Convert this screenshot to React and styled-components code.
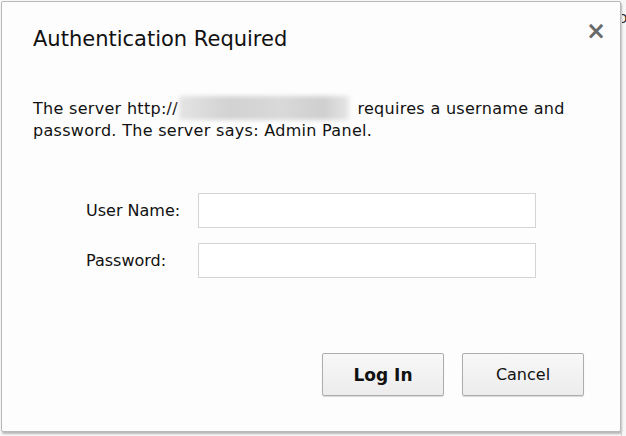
import React from "react";
import styled, { createGlobalStyle } from "styled-components";

const Global = createGlobalStyle`
  html, body { margin: 0; padding: 0; background: #f7f7f7; }
  body { font-family: "DejaVu Sans", "Liberation Sans", sans-serif; color: #222; }
`;

export default function App() {
  return (
    <Page>
      <Global />
      <Dialog>
        <Header>
          <Title>Authentication Required</Title>
          <Close>×</Close>
        </Header>
        <Message>
          The server http://<Blur /> requires a username and password. The server says: Admin Panel.
        </Message>
        <Form>
          <Label>User Name:</Label>
          <Input type="text" />
          <Label>Password:</Label>
          <Input type="password" />
        </Form>
        <Actions>
          <Button $primary>Log In</Button>
          <Button>Cancel</Button>
        </Actions>
      </Dialog>
      <Behind>
        <span>D</span>
      </Behind>
    </Page>
  );
}

const Page = styled.div`
  display: flex;
  width: 626px;
  height: 436px;
  padding: 1px 0 0 1px;
  box-sizing: border-box;
  overflow: hidden;
`;

const Dialog = styled.div`
  width: 620px;
  height: 431px;
  box-sizing: border-box;
  flex-shrink: 0;
  background: #fdfdfd;
  border: 1px solid #b9b9b9;
  border-radius: 2px;
  box-shadow: 1px 2px 2px rgba(0, 0, 0, 0.25);
  padding: 22px 14px 0 31px;
  display: flex;
  flex-direction: column;
`;

const Header = styled.div`
  display: flex;
  justify-content: space-between;
  align-items: flex-start;
`;

const Title = styled.h1`
  margin: 0;
  font-family: "DejaVu Sans", sans-serif;
  font-weight: normal;
  font-size: 21px;
  line-height: 30px;
  color: #111;
`;

const Close = styled.span`
  font-family: "DejaVu Sans", sans-serif;
  font-size: 24px;
  font-weight: bold;
  line-height: 20px;
  color: #6a6a6a;
  margin-top: -3px;
`;

const Message = styled.p`
  margin: 42px 30px 0 0;
  font-family: "DejaVu Sans", sans-serif;
  font-size: 16px;
  line-height: 22px;
  letter-spacing: 0.3px;
  color: #111;
`;

const Blur = styled.span`
  display: inline-block;
  width: 170px;
  height: 24px;
  margin: 0 3px 0 1px;
  vertical-align: -6px;
  background: linear-gradient(90deg, #e4e4e4, #d2d2d2 30%, #d9d9d9 60%, #cfcfcf 85%, #e6e6e6);
  filter: blur(2px);
`;

const Form = styled.div`
  display: grid;
  grid-template-columns: 112px 338px;
  row-gap: 15px;
  align-items: center;
  margin: 51px 0 0 53px;
`;

const Label = styled.label`
  font-family: "DejaVu Sans", sans-serif;
  font-size: 16px;
  color: #111;
`;

const Input = styled.input`
  height: 35px;
  box-sizing: border-box;
  border: 1px solid #d4d4d4;
  background: #fff;
  margin: 0;
  outline: none;
`;

const Actions = styled.div`
  display: flex;
  justify-content: flex-end;
  gap: 18px;
  margin-top: auto;
  margin-bottom: 35px;
  padding-right: 22px;
`;

const Button = styled.button`
  width: 122px;
  height: 43px;
  box-sizing: border-box;
  border: 1px solid #adadad;
  border-radius: 2px;
  background: linear-gradient(#f8f8f8, #ececec);
  box-shadow: 0 1px 1px rgba(0, 0, 0, 0.15);
  font-family: "DejaVu Sans", sans-serif;
  font-size: ${(p) => (p.$primary ? "17px" : "16px")};
  font-weight: ${(p) => (p.$primary ? "bold" : "normal")};
  color: #111;
`;

const Behind = styled.div`
  flex: 1;
  margin-top: 11px;
  border-left: 1px solid #cfcfcf;
  overflow: hidden;
  font-family: "DejaVu Sans", sans-serif;
  font-size: 12px;
  color: #222;
  span { display: block; margin-left: -4px; }
`;
